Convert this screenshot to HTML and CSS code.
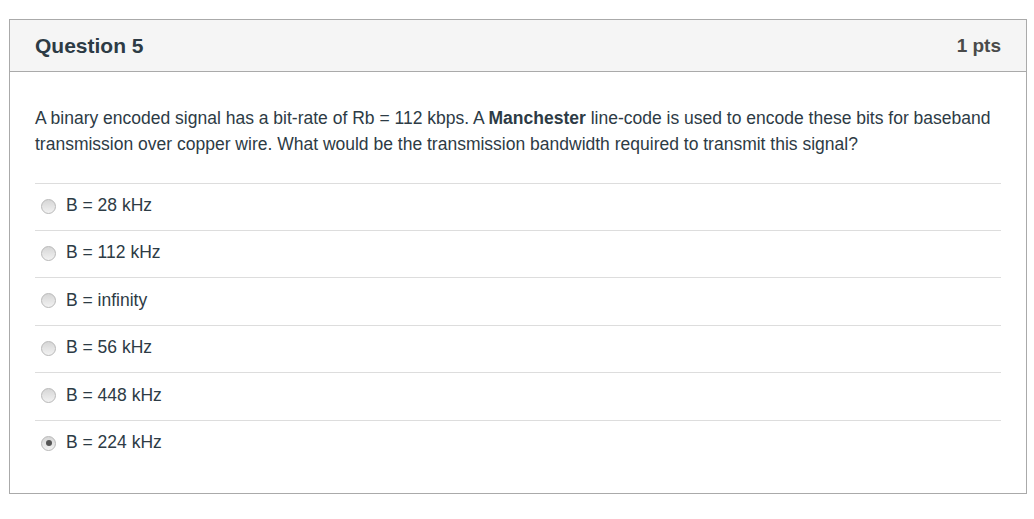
FILE: index.html
```html
<!DOCTYPE html>
<html>
<head>
<meta charset="utf-8">
<link rel="stylesheet" href="styles.css">
</head>
<body>
<div class="question">
  <div class="q-header">
    <span class="q-title">Question 5</span>
    <span class="q-pts">1 pts</span>
  </div>
  <div class="q-body">
    <p class="q-text">A binary encoded signal has a bit-rate of Rb = 112 kbps. A <strong>Manchester</strong> line-code is used to encode these bits for baseband transmission over copper wire. What would be the transmission bandwidth required to transmit this signal?</p>
    <div class="answers">
      <div class="answer"><span class="radio"></span><span class="label">B = 28 kHz</span></div>
      <div class="answer"><span class="radio"></span><span class="label">B = 112 kHz</span></div>
      <div class="answer"><span class="radio"></span><span class="label">B = infinity</span></div>
      <div class="answer"><span class="radio"></span><span class="label">B = 56 kHz</span></div>
      <div class="answer"><span class="radio"></span><span class="label">B = 448 kHz</span></div>
      <div class="answer"><span class="radio checked"></span><span class="label">B = 224 kHz</span></div>
    </div>
  </div>
</div>
</body>
</html>
```
FILE: styles.css
```css
html, body {
  margin: 0;
  padding: 0;
  background: #ffffff;
}
body {
  padding: 19px 7px 0 9px;
  font-family: "Liberation Sans", Arial, sans-serif;
  color: #2d3b45;
}
.question {
  border: 1px solid #aaaaaa;
  width: 1016px;
  height: 473px;
  box-sizing: content-box;
}
.q-header {
  display: flex;
  justify-content: space-between;
  align-items: center;
  height: 51px;
  background: #f5f5f5;
  border-bottom: 1px solid #aaaaaa;
  padding: 0 25px;
}
.q-title {
  font-weight: bold;
  font-size: 21px;
}
.q-pts {
  font-weight: bold;
  font-size: 19px;
  color: #4a4a4a;
}
.q-body {
  padding: 0 25px;
}
.q-text {
  margin: 0;
  padding-top: 33px;
  padding-bottom: 26px;
  font-size: 17.5px;
  line-height: 26px;
}
.answer {
  display: flex;
  align-items: center;
  height: 46.5px;
  border-top: 1px solid #dddddd;
  font-size: 17.5px;
  padding-left: 6px;
  padding-bottom: 2px;
  box-sizing: border-box;
}
.answer + .answer {
  height: 47.5px;
}
.radio {
  width: 15px;
  height: 15px;
  border-radius: 50%;
  border: 1px solid #b8b8b8;
  box-sizing: border-box;
  background: linear-gradient(#d6d6d6, #f2f2f2);
  margin-right: 10px;
  margin-top: 1px;
  position: relative;
  flex: none;
}
.radio.checked::after {
  content: "";
  position: absolute;
  left: 3.5px;
  top: 3.5px;
  width: 6px;
  height: 6px;
  border-radius: 50%;
  background: #555555;
}
```
